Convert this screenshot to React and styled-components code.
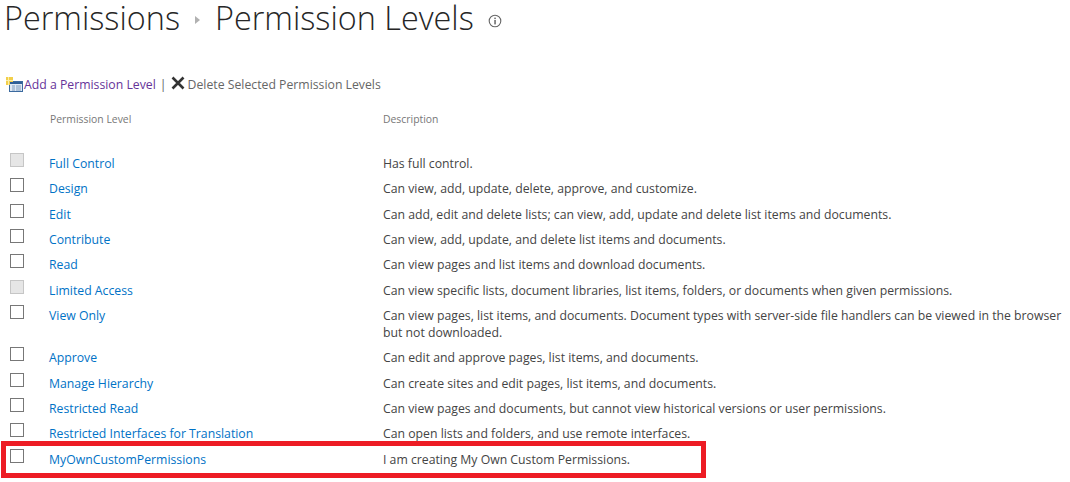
import React from 'react';
import styled, { createGlobalStyle } from 'styled-components';

const GlobalStyle = createGlobalStyle`
  html, body {
    margin: 0;
    padding: 0;
    background: #fff;
  }
  body {
    font-family: "Open Sans", "Noto Sans", "Liberation Sans", sans-serif;
    font-size: 12.25px;
    color: #444;
  }
`;

const levels = [
  { name: 'Full Control', desc: 'Has full control.', locked: true },
  { name: 'Design', desc: 'Can view, add, update, delete, approve, and customize.' },
  { name: 'Edit', desc: 'Can add, edit and delete lists; can view, add, update and delete list items and documents.' },
  { name: 'Contribute', desc: 'Can view, add, update, and delete list items and documents.' },
  { name: 'Read', desc: 'Can view pages and list items and download documents.' },
  { name: 'Limited Access', desc: 'Can view specific lists, document libraries, list items, folders, or documents when given permissions.', locked: true },
  { name: 'View Only', desc: 'Can view pages, list items, and documents. Document types with server-side file handlers can be viewed in the browser but not downloaded.', tall: true },
  { name: 'Approve', desc: 'Can edit and approve pages, list items, and documents.' },
  { name: 'Manage Hierarchy', desc: 'Can create sites and edit pages, list items, and documents.' },
  { name: 'Restricted Read', desc: 'Can view pages and documents, but cannot view historical versions or user permissions.' },
  { name: 'Restricted Interfaces for Translation', desc: 'Can open lists and folders, and use remote interfaces.' },
  { name: 'MyOwnCustomPermissions', desc: 'I am creating My Own Custom Permissions.' },
];

function AddIcon() {
  return (
    <svg width="18" height="16" viewBox="0 0 18 16">
      <rect x="3.5" y="4.5" width="13" height="10" fill="#dfe9f5" stroke="#3b6a9f" />
      <rect x="4" y="5" width="12" height="2" fill="#2f5f97" />
      <path d="M6 9h3M10 9h5M6 11h3M10 11h5M6 13h3M10 13h5" stroke="#7f9cbd" />
      <path d="M0 0h7v5H4v3H0z" fill="#f2cf4a" />
      <path d="M2 0h1v8H2zM0 3h7v1H0z" fill="#fbeea8" />
    </svg>
  );
}

function DeleteIcon() {
  return (
    <svg width="14" height="14" viewBox="0 0 14 14">
      <path d="M1.5 1.5L12.5 12.5M12.5 1.5L1.5 12.5" stroke="#333" strokeWidth="2.6" />
    </svg>
  );
}

function InfoIcon() {
  return (
    <svg width="14" height="14" viewBox="0 0 14 14">
      <circle cx="7" cy="7" r="5.8" fill="none" stroke="#666" strokeWidth="1.1" />
      <rect x="6.3" y="6" width="1.5" height="4.4" fill="#666" />
      <rect x="6.3" y="3.6" width="1.5" height="1.5" fill="#666" />
    </svg>
  );
}

export default function App() {
  return (
    <>
      <GlobalStyle />
      <Page>
        <Title>
          <span>Permissions</span>
          <Arrow />
          <span>Permission Levels</span>
          <InfoWrap>
            <InfoIcon />
          </InfoWrap>
        </Title>

        <Toolbar>
          <AddIcon />
          <AddLink>Add a Permission Level</AddLink>
          <Divider>|</Divider>
          <DeleteWrap>
            <DeleteIcon />
          </DeleteWrap>
          <span>Delete Selected Permission Levels</span>
        </Toolbar>

        <HeaderRow>
          <span>Permission Level</span>
          <span>Description</span>
        </HeaderRow>

        <List>
          {levels.map(level => (
            <Row key={level.name} $tall={level.tall}>
              <Check $locked={level.locked} />
              <NameLink>{level.name}</NameLink>
              <Desc>{level.desc}</Desc>
            </Row>
          ))}
        </List>

        <Highlight />
      </Page>
    </>
  );
}

const Page = styled.div`
  position: relative;
  width: 1070px;
  height: 482px;
  overflow: hidden;
`;

const Title = styled.h1`
  display: flex;
  align-items: center;
  height: 34px;
  margin: 0;
  padding-left: 4px;
  font-size: 32.4px;
  font-weight: 300;
  line-height: 34px;
  color: #262626;
  white-space: nowrap;
`;

const Arrow = styled.i`
  width: 0;
  height: 0;
  margin: 6px 15px 0 15px;
  border-left: 5px solid #b1b1b1;
  border-top: 4px solid transparent;
  border-bottom: 4px solid transparent;
`;

const InfoWrap = styled.span`
  display: flex;
  margin: 7px 0 0 14px;
`;

const Toolbar = styled.div`
  display: flex;
  align-items: center;
  height: 20px;
  margin-top: 41px;
  padding-left: 6px;
  line-height: 20px;
  color: #666;
  white-space: nowrap;
`;

const AddLink = styled.a`
  color: #663399;
`;

const Divider = styled.span`
  margin: 0 4px 0 4px;
`;

const DeleteWrap = styled.span`
  display: flex;
  margin: -5px 3px 0 0;
`;

const HeaderRow = styled.div`
  display: grid;
  grid-template-columns: 333px 1fr;
  height: 18px;
  margin-top: 15px;
  padding-left: 50px;
  font-size: 10.4px;
  line-height: 18px;
  color: #777;
`;

const List = styled.div`
  display: flex;
  flex-direction: column;
  margin-top: 27px;
`;

const Row = styled.div`
  display: grid;
  grid-template-columns: 39px 334px 1fr;
  height: ${props => (props.$tall ? '42.33px' : '25.33px')};
  padding-left: 10px;
  line-height: 17px;
`;

const Check = styled.div`
  box-sizing: border-box;
  width: 14px;
  height: 14px;
  margin-top: -2px;
  border: 1px solid ${props => (props.$locked ? '#c6c6c6' : '#777')};
  background: ${props => (props.$locked ? '#e6e6e6' : '#fff')};
`;

const NameLink = styled.a`
  color: #0072c6;
  white-space: nowrap;
`;

const Desc = styled.div`
  color: #444;
  width: 687px;
`;

const Highlight = styled.div`
  position: absolute;
  left: 1px;
  top: 441px;
  box-sizing: border-box;
  width: 705px;
  height: 37px;
  border: 5px solid #ed1c24;
  pointer-events: none;
`;
